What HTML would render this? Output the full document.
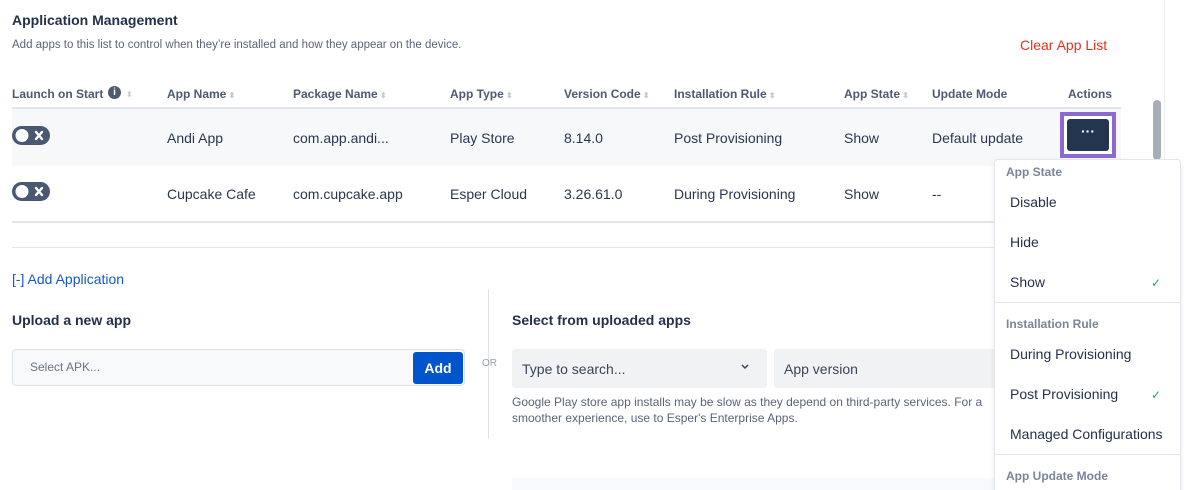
<!DOCTYPE html>
<html><head><meta charset="utf-8"><style>
*{margin:0;padding:0;box-sizing:border-box}
html,body{width:1184px;height:490px;overflow:hidden}
body{background:#fff;font-family:"Liberation Sans",sans-serif;color:#2a3650;position:relative}
.a{position:absolute;white-space:nowrap}
.h{font-size:12px;font-weight:bold;color:#4d5a70;top:87px}
.c{font-size:14px;color:#2a3650}
.s{font-size:8px;color:#c5cad3}
.tog{position:absolute;width:38px;height:19px}
.m{position:absolute;left:1010px;font-size:14px;color:#24304a}
.mh{position:absolute;left:1006px;font-size:12px;font-weight:bold;color:#7b8598}
.ck{position:absolute;left:1151px;color:#2a9d6a;font-size:12px}
</style></head><body>
<div class="a" style="left:12px;top:12px;font-size:14px;font-weight:bold;color:#24304a">Application Management</div>
<div class="a" style="left:12px;top:39px;font-size:11.5px;color:#5a6478">Add apps to this list to control when they’re installed and how they appear on the device.</div>
<div class="a" style="left:1020px;top:37px;font-size:14px;color:#e0341c">Clear App List</div>
<div style="position:absolute;left:1164px;top:0;width:1px;height:490px;background:#eceef1"></div>
<div style="position:absolute;left:1153px;top:100px;width:8px;height:60px;border-radius:4px;background:#a8aeb8"></div>

<div class="a h" style="left:12px">Launch on Start</div>
<div class="a" style="left:108px;top:86px;width:13px;height:13px;border-radius:50%;background:#4d5a70;color:#fff;font-size:10px;font-weight:bold;text-align:center;line-height:13px">i</div>
<div class="a s" style="left:126px;top:90px">⬍</div>
<div class="a h" style="left:167px">App Name<span class="s"> ⬍</span></div>
<div class="a h" style="left:293px">Package Name<span class="s"> ⬍</span></div>
<div class="a h" style="left:450px">App Type<span class="s"> ⬍</span></div>
<div class="a h" style="left:564px">Version Code<span class="s"> ⬍</span></div>
<div class="a h" style="left:674px">Installation Rule<span class="s"> ⬍</span></div>
<div class="a h" style="left:844px">App State<span class="s"> ⬍</span></div>
<div class="a h" style="left:932px">Update Mode</div>
<div class="a h" style="left:1068px">Actions</div>

<div style="position:absolute;left:12px;top:107px;width:1109px;height:2px;background:#e2e5ea"></div>
<div style="position:absolute;left:12px;top:109px;width:1109px;height:57px;background:#f7f8fa"></div>
<div style="position:absolute;left:12px;top:221px;width:1109px;height:2px;background:#e2e5ea"></div>
<div style="position:absolute;left:12px;top:247px;width:1109px;height:1px;background:#e4e6ea"></div>

<svg class="tog" style="left:12px;top:126px" viewBox="0 0 38 19"><rect width="38" height="19" rx="9.5" fill="#4b5871"/><circle cx="10" cy="9.5" r="6.5" fill="#fff"/><path d="M24 6l6 7M30 6l-6 7" stroke="#fff" stroke-width="2.4" stroke-linecap="round"/></svg>
<div class="a c" style="left:167px;top:130px">Andi App</div>
<div class="a c" style="left:293px;top:130px">com.app.andi...</div>
<div class="a c" style="left:450px;top:130px">Play Store</div>
<div class="a c" style="left:564px;top:130px">8.14.0</div>
<div class="a c" style="left:674px;top:130px">Post Provisioning</div>
<div class="a c" style="left:844px;top:130px">Show</div>
<div class="a c" style="left:932px;top:130px">Default update</div>
<div style="position:absolute;left:1060px;top:112px;width:56px;height:46px;background:#8c6bd0;padding:4px"><div style="width:48px;height:38px;background:#fff;padding:3px"><div style="width:42px;height:32px;background:#243550;border-radius:3px;color:#fff;text-align:center;font-size:14px;font-weight:bold;line-height:24px">···</div></div></div>

<svg class="tog" style="left:12px;top:182px" viewBox="0 0 38 19"><rect width="38" height="19" rx="9.5" fill="#4b5871"/><circle cx="10" cy="9.5" r="6.5" fill="#fff"/><path d="M24 6l6 7M30 6l-6 7" stroke="#fff" stroke-width="2.4" stroke-linecap="round"/></svg>
<div class="a c" style="left:167px;top:186px">Cupcake Cafe</div>
<div class="a c" style="left:293px;top:186px">com.cupcake.app</div>
<div class="a c" style="left:450px;top:186px">Esper Cloud</div>
<div class="a c" style="left:564px;top:186px">3.26.61.0</div>
<div class="a c" style="left:674px;top:186px">During Provisioning</div>
<div class="a c" style="left:844px;top:186px">Show</div>
<div class="a c" style="left:932px;top:186px">--</div>

<div class="a" style="left:12px;top:271px;font-size:14px;color:#1558c8">[-] Add Application</div>
<div class="a" style="left:12px;top:312px;font-size:14px;font-weight:bold;color:#24304a">Upload a new app</div>
<div style="position:absolute;left:488px;top:289px;width:1px;height:150px;background:#e0e3e8"></div>
<div class="a" style="left:482px;top:358px;font-size:10px;color:#9aa2ae">OR</div>
<div style="position:absolute;left:12px;top:349px;width:453px;height:37px;border:1px solid #dde1e7;border-radius:4px;background:#f8f9fb"></div>
<div class="a" style="left:30px;top:360px;font-size:12px;color:#6a7385">Select APK...</div>
<div class="a" style="left:413px;top:352px;width:50px;height:32px;background:#0055cc;border-radius:3px;color:#fff;font-weight:bold;font-size:14px;text-align:center;line-height:32px">Add</div>

<div class="a" style="left:512px;top:312px;font-size:14px;font-weight:bold;color:#24304a">Select from uploaded apps</div>
<div style="position:absolute;left:512px;top:349px;width:255px;height:39px;background:#f1f2f4;border-radius:3px"></div>
<div class="a" style="left:522px;top:361px;font-size:14px;color:#3a4558">Type to search...</div>
<svg class="a" style="left:741px;top:364px" width="8" height="6" viewBox="0 0 8 6"><path d="M1 1l3 3 3-3" stroke="#3a4558" stroke-width="1.5" fill="none"/></svg>
<div style="position:absolute;left:774px;top:349px;width:230px;height:39px;background:#f1f2f4;border-radius:3px"></div>
<div class="a" style="left:784px;top:361px;font-size:14px;color:#3a4558">App version</div>
<div class="a" style="left:512px;top:394px;font-size:12px;color:#5a6478;line-height:16px">Google Play store app installs may be slow as they depend on third-party services. For a<br>smoother experience, use to Esper's Enterprise Apps.</div>
<div style="position:absolute;left:512px;top:478px;width:490px;height:12px;background:#f7f9fc"></div>

<div style="position:absolute;left:994px;top:159px;width:187px;height:340px;background:#fff;border:1px solid #e3e6ea;border-radius:4px;box-shadow:0 2px 6px rgba(0,0,0,.08)"></div>
<div class="mh" style="top:165px">App State</div>
<div class="m" style="top:194px">Disable</div>
<div class="m" style="top:234px">Hide</div>
<div class="m" style="top:274px">Show</div><div class="ck" style="top:276px">✓</div>
<div style="position:absolute;left:995px;top:302px;width:186px;height:1px;background:#e3e6ea"></div>
<div class="mh" style="top:317px">Installation Rule</div>
<div class="m" style="top:346px">During Provisioning</div>
<div class="m" style="top:386px">Post Provisioning</div><div class="ck" style="top:388px">✓</div>
<div class="m" style="top:426px">Managed Configurations</div>
<div style="position:absolute;left:995px;top:454px;width:186px;height:1px;background:#e3e6ea"></div>
<div class="mh" style="top:469px">App Update Mode</div>
</body></html>
